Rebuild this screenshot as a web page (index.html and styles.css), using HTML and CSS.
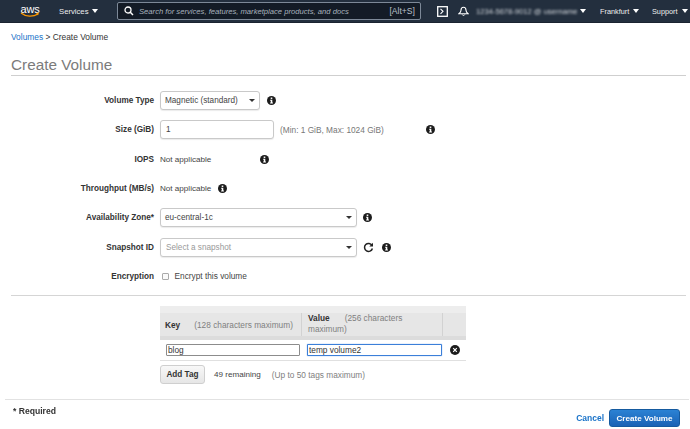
FILE: index.html
```html
<!DOCTYPE html>
<html lang="en">
<head>
<meta charset="utf-8">
<title>Create Volume</title>
<link rel="stylesheet" href="styles.css">
</head>
<body>
<header class="nav">
  <div class="logo"><span class="logo-text">aws</span>
    <svg class="smile" width="20" height="6" viewBox="0 0 20 6"><path d="M1 1c5 4 12 4 17 1" fill="none" stroke="#f90" stroke-width="1.3"/><path d="M16 1l3-.4-1 3z" fill="#f90"/></svg>
  </div>
  <div class="nav-item services">Services <i class="caret"></i></div>
  <div class="search">
    <svg width="10" height="10" viewBox="0 0 10 10"><circle cx="4" cy="4" r="3" fill="none" stroke="#fff" stroke-width="1.3"/><path d="M6.3 6.3L9 9" stroke="#fff" stroke-width="1.5"/></svg>
    <span class="search-text">Search for services, features, marketplace products, and docs</span>
    <span class="search-key">[Alt+S]</span>
  </div>
  <svg class="cloudshell" width="11" height="11" viewBox="0 0 11 11"><rect x=".7" y=".7" width="9.6" height="9.6" fill="none" stroke="#fff" stroke-width="1.3"/><path d="M3.5 2.8L6 5.3 3.5 7.8" fill="none" stroke="#fff" stroke-width="1.1"/></svg>
  <svg class="bell" width="11" height="11" viewBox="0 0 11 11"><path d="M5.5 1.2C3.8 1.2 3 2.6 3 4.2c0 1.7-1 2.6-2 3.5h9c-1-.9-2-1.8-2-3.5 0-1.6-.8-3-2.5-3z" fill="none" stroke="#fff" stroke-width="1.1"/><path d="M4.2 8.5a1.4 1.4 0 0 0 2.6 0" fill="none" stroke="#fff" stroke-width="1"/></svg>
  <div class="nav-item account"><span class="blurred">1234-5678-9012 @ username</span> <i class="caret"></i></div>
  <div class="nav-item region">Frankfurt <i class="caret"></i></div>
  <div class="nav-item support">Support <i class="caret"></i></div>
</header>

<main class="page">
  <div class="crumbs"><a class="link">Volumes</a> &gt; Create Volume</div>
  <h1 class="title">Create Volume</h1>

  <form class="form">
    <div class="row">
      <label class="lbl">Volume Type</label>
      <div class="field select w100"><span>Magnetic (standard)</span><i class="arrow"></i></div>
      <svg class="info i-type" viewBox="0 0 10 10"><use href="#info"/></svg>
    </div>
    <div class="row">
      <label class="lbl">Size (GiB)</label>
      <div class="field w115"><span class="val-pad">1</span></div>
      <span class="hint">(Min: 1 GiB, Max: 1024 GiB)</span>
      <svg class="info i-size" viewBox="0 0 10 10"><use href="#info"/></svg>
    </div>
    <div class="row">
      <label class="lbl">IOPS</label>
      <span class="plain">Not applicable</span>
      <svg class="info i-iops" viewBox="0 0 10 10"><use href="#info"/></svg>
    </div>
    <div class="row">
      <label class="lbl">Throughput (MB/s)</label>
      <span class="plain">Not applicable</span>
      <svg class="info i-thr" viewBox="0 0 10 10"><use href="#info"/></svg>
    </div>
    <div class="row">
      <label class="lbl">Availability Zone*</label>
      <div class="field select w197"><span>eu-central-1c</span><i class="arrow"></i></div>
      <svg class="info i-az" viewBox="0 0 10 10"><use href="#info"/></svg>
    </div>
    <div class="row">
      <label class="lbl">Snapshot ID</label>
      <div class="field select w197"><span class="placeholder">Select a snapshot</span><i class="arrow"></i></div>
      <svg class="refresh" width="11" height="11" viewBox="0 0 11 11"><path d="M9 3.4A4 4 0 1 0 9.4 6.5" fill="none" stroke="#222" stroke-width="1.5"/><path d="M10 .8v3.7H6.3z" fill="#222"/></svg>
      <svg class="info i-snap" viewBox="0 0 10 10"><use href="#info"/></svg>
    </div>
    <div class="row">
      <label class="lbl">Encryption</label>
      <span class="check"></span>
      <span class="plain dark">Encrypt this volume</span>
    </div>
  </form>

  <hr class="rule">

  <section class="tags">
    <div class="tag-head">
      <div class="th th-key"><b>Key</b><span class="muted">(128 characters maximum)</span></div>
      <div class="th th-val"><b>Value</b><span class="muted val-note">(256 characters maximum)</span></div>
      <div class="th th-x"></div>
    </div>
    <div class="tag-row">
      <input class="tag-input" value="blog">
      <input class="tag-input focus" value="temp volume2">
      <svg class="remove" width="10" height="10" viewBox="0 0 10 10"><circle cx="5" cy="5" r="5" fill="#1c1c1c"/><path d="M3.2 3.2l3.6 3.6M6.8 3.2L3.2 6.8" stroke="#fff" stroke-width="1.2"/></svg>
    </div>
    <div class="tag-actions">
      <button type="button" class="btn">Add Tag</button>
      <span class="remaining">49 remaining</span>
      <span class="muted limit">(Up to 50 tags maximum)</span>
    </div>
  </section>
</main>

<footer class="foot">
  <div class="req">* Required</div>
  <div class="foot-actions">
    <a class="link cancel">Cancel</a>
    <button type="button" class="primary">Create Volume</button>
  </div>
</footer>

<svg class="defs" width="0" height="0">
  <symbol id="info" viewBox="0 0 10 10">
    <circle cx="5" cy="5" r="5" fill="#1c1c1c"/>
    <rect x="4.1" y="1.7" width="1.8" height="1.6" fill="#fff"/>
    <path d="M3.5 4.2h2.4v3.1h.7v1H3.5v-1h.7V5.2h-.7z" fill="#fff"/>
  </symbol>
</svg>
</body>
</html>
```

FILE: styles.css
```css
* { box-sizing: border-box; }
html, body { margin: 0; padding: 0; }
body {
  width: 690px;
  height: 429px;
  overflow: hidden;
  background: #fff;
  font-family: "Liberation Sans", Arial, sans-serif;
  font-size: 8.1px;
  color: #444;
}
.defs { display: block; height: 0; }

/* top bar */
.nav {
  display: flex;
  align-items: center;
  height: 23px;
  background: #232f3e;
  color: #fff;
  border-bottom: 1px solid #1a2330;
}
.nav > * { flex: none; }
.logo {
  width: 20px;
  margin-left: 20px;
  display: flex;
  flex-direction: column;
  align-items: center;
  line-height: 8px;
}
.logo-text { font-size: 11px; font-weight: 400; letter-spacing: -.2px; }
.smile { display: block; margin-top: -1px; }
.nav-item { display: flex; align-items: center; white-space: nowrap; color: #eee; }
.services { margin-left: 19px; font-size: 7.7px; width: 58px; gap: 4px; }
.caret {
  display: inline-block;
  width: 0;
  height: 0;
  border-left: 3px solid transparent;
  border-right: 3px solid transparent;
  border-top: 4px solid #fff;
}
.search {
  width: 304px;
  height: 18px;
  display: flex;
  align-items: center;
  padding: 0 5px 0 6px;
  background: #131b26;
  border: 1px solid #7d8998;
  border-radius: 2px;
}
.search-text { margin-left: 5px; font-style: italic; color: #a9b2bd; font-size: 7.65px; flex: 1; white-space: nowrap; }
.search-key { color: #b9c0c9; font-size: 8.6px; }
.cloudshell { margin-left: 16px; }
.bell { margin-left: 10px; }
.account { margin-left: 7px; width: 110px; gap: 3px; }
.blurred { filter: blur(1.3px); color: #d5d9de; width: 101px; font-size: 7.6px; white-space: nowrap; }
.region { margin-left: 14px; width: 52px; gap: 4px; font-size: 7.3px; }
.support { gap: 4px; font-size: 7.3px; }

/* page */
.page { padding: 0 4px 0 11px; }
.crumbs { margin-top: 10px; height: 9px; line-height: 9px; color: #333; font-size: 8.4px; }
.link { color: #1166bb; }
.crumbs .link { color: #1a73c9; }
.title {
  margin: 12px 0 0;
  height: 22px;
  font-size: 15.3px;
  line-height: 22px;
  font-weight: 400;
  color: #7b7b7b;
  border-bottom: 1px solid #cfcfcf;
}

/* form */
.form { margin-top: 10px; margin-left: -11px; }
.row { display: flex; align-items: center; height: 29.3px; }
.lbl { width: 154px; text-align: right; font-weight: 700; color: #333; font-size: 8.2px; margin-right: 6px; white-space: nowrap; }
.field {
  display: flex;
  align-items: center;
  height: 19px;
  background: #fff;
  border: 1px solid #c9c9c9;
  border-radius: 3px;
  box-shadow: 0 1px 1px rgba(0,0,0,.08);
  color: #444;
  padding: 0 4px;
  font-size: 8.2px;
}
.select { justify-content: space-between; }
.w100 { width: 100px; }
.w115 { width: 114px; }
.w197 { width: 197px; }
.val-pad { padding-left: 1px; }
.placeholder { color: #999; padding-left: 1px; }
.arrow {
  display: block;
  width: 0;
  height: 0;
  border-left: 3px solid transparent;
  border-right: 3px solid transparent;
  border-top: 3px solid #333;
}
.hint { margin-left: 6px; color: #777; font-size: 8.3px; white-space: nowrap; }
.plain { color: #444; font-size: 8.1px; white-space: nowrap; }
.dark { margin-left: 5.5px; font-size: 8.3px; }
.info { width: 9px; height: 9px; flex: none; }
.i-type { margin-left: 6.5px; }
.i-size { margin-left: 42px; }
.i-iops { margin-left: 49px; }
.i-thr { margin-left: 6.5px; }
.i-az { margin-left: 6px; }
.i-snap { margin-left: 8px; }
.refresh { margin-left: 6px; }
.check {
  width: 7px;
  height: 7px;
  margin-left: 2px;
  border: 1px solid #aaa;
  border-radius: 1px;
  background: #fafafa;
}

.rule { margin: 4px 0 0; height: 1px; border: 0; background: #d5d5d5; }

/* tags */
.tags { width: 306px; margin: 10px 0 0 149px; }
.tag-head {
  display: flex;
  height: 34px;
  background: #e6e6e6;
  border-top: 7px solid #ededed;
  border-bottom: 4px solid #dcdcdc;
}
.th { display: flex; align-items: center; font-size: 8.3px; }
.th b { color: #333; }
.muted { color: #808080; }
.th-key { width: 142px; padding-left: 5px; gap: 14px; white-space: nowrap; border-right: 1px solid #d2d2d2; }
.th-val { width: 141px; padding: 0 6px 0 6px; display: block; line-height: 11px; border-right: 1px solid #d2d2d2; }
.val-note { margin-left: 15px; }
.th-x { flex: 1; }
.tag-row {
  display: flex;
  align-items: center;
  height: 21px;
  border-bottom: 1px solid #e0e0e0;
  padding-left: 6px;
}
.tag-input {
  height: 12px;
  width: 134px;
  padding: 0 1px;
  margin: 0 7px 0 0;
  font: 8.3px "Liberation Sans", Arial, sans-serif;
  color: #333;
  border: 1px solid #8c8c8c;
  border-radius: 1px;
  background: #fff;
  outline: 0;
}
.tag-input.focus { width: 135px; border-color: #3b7fd9; box-shadow: 0 0 1px #3b7fd9; }
.remove { margin-left: 1px; }
.tag-actions { display: flex; align-items: center; margin-top: 4px; height: 19px; white-space: nowrap; }
.btn {
  width: 45px;
  height: 19px;
  padding: 0;
  font: 700 8.2px "Liberation Sans", Arial, sans-serif;
  color: #333;
  background: linear-gradient(#f8f8f8, #e6e6e6);
  border: 1px solid #cfcfcf;
  border-radius: 3px;
}
.remaining { margin-left: 9px; color: #444; }
.limit { margin-left: 11px; font-size: 8.3px; }

/* footer */
.foot {
  position: fixed;
  left: 5px;
  right: 1px;
  bottom: 0;
  height: 30px;
  border-top: 1px solid #e2e2e2;
  display: flex;
  justify-content: space-between;
  padding: 0 9px 0 8px;
}
.req { margin-top: 7px; font-weight: 700; color: #333; font-size: 8.6px; line-height: 9px; }
.foot-actions { display: flex; align-items: center; gap: 5px; height: 36px; }
.cancel { font-weight: 700; font-size: 8.5px; color: #1a73c9; }
.primary {
  width: 71px;
  height: 18px;
  padding: 0;
  font: 700 8.1px "Liberation Sans", Arial, sans-serif;
  color: #fff;
  background: linear-gradient(#2b82d4, #1a62b5);
  border: 1px solid #155a9f;
  border-radius: 3px;
}
```
